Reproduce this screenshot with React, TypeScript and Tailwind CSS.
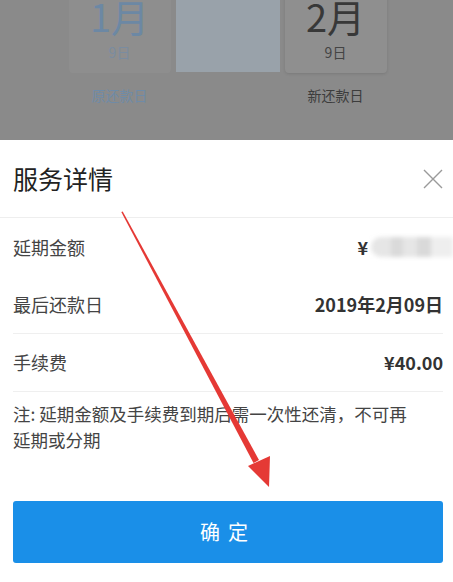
import React from 'react';

const font = { fontFamily: '"Noto Sans CJK SC", "Noto Sans", sans-serif' };

const DateCard = ({ month, day, label, active }: { month: string; day: string; label: string; active?: boolean }) => (
    <div className="flex flex-col items-center">
        <div className={`flex h-[105px] w-[102px] flex-col items-center justify-end rounded-[4px] pb-[14px] ${active ? 'bg-[#8f8f8f] shadow-[0_1px_3px_rgba(0,0,0,0.12)]' : 'bg-[#8e8e8e]'}`}>
            <div className={`text-[38px] leading-none ${active ? 'text-[#383838]' : 'text-[#6c88a4]'}`}>{month}</div>
            <div className={`mt-[10px] text-[14px] leading-none ${active ? 'text-[#444]' : 'text-[#7a8ca0]'}`}>{day}</div>
        </div>
        <div className={`mt-[15px] text-[14px] leading-none ${active ? 'text-[#3c3c3c]' : 'text-[#6f8ba7]'}`}>{label}</div>
    </div>
);

const Row = ({ label, children, divider }: { label: string; children: React.ReactNode; divider?: boolean }) => (
    <div className={`ml-[13px] mr-[10px] flex h-[58px] items-center justify-between ${divider ? 'border-b border-[#efefef]' : ''}`}>
        <span className="text-[18px] text-[#444]">{label}</span>
        {children}
    </div>
);

export default function App() {
    return (
        <div className="relative h-[582px] w-[453px] overflow-hidden bg-white" style={font}>
            {/* dimmed page behind the sheet */}
            <div className="h-[140px] overflow-hidden bg-[#8a8a8a]">
                <div className="-mt-[32px] flex items-start justify-center gap-[5px] pl-[2px]">
                    <DateCard month="1月" day="9日" label="原还款日" />
                    <div className="h-[104px] w-[104px] bg-[#99a2aa]" />
                    <DateCard month="2月" day="9日" label="新还款日" active />
                </div>
            </div>

            {/* sheet */}
            <div className="flex h-[78px] items-center justify-between border-b border-[#eeeeee] pl-[13px] pr-[10px]">
                <span className="text-[25px] text-[#222]">服务详情</span>
                <svg width="20" height="20" viewBox="0 0 20 20">
                    <path d="M1 1 L19 19 M19 1 L1 19" stroke="#9a9a9a" strokeWidth="1.4" fill="none" />
                </svg>
            </div>

            <Row label="延期金额">
                <div className="-mr-[10px] flex items-center">
                    <span className="text-[18px] font-bold text-[#333]">¥</span>
                    <div className="ml-[3px] flex h-[22px] w-[82px] items-center blur-[2px]">
                        <div className="h-[20px] w-[20px] rounded-l-full bg-[#e6e6e6]" />
                        <div className="h-[20px] w-[12px] bg-[#dadada]" />
                        <div className="h-[20px] w-[14px] bg-[#e6e6e6]" />
                        <div className="h-[20px] w-[14px] bg-[#d9d9d9]" />
                        <div className="h-[20px] w-[22px] bg-[#eeeeee]" />
                    </div>
                </div>
            </Row>
            <Row label="最后还款日" divider>
                <span className="text-[18px] font-bold text-[#333]">2019年2月09日</span>
            </Row>
            <Row label="手续费" divider>
                <span className="text-[18px] font-bold text-[#333]">¥40.00</span>
            </Row>

            <p className="mx-[13px] mt-[9px] text-[17.5px] leading-[26px] text-[#444]">
                注: 延期金额及手续费到期后需一次性还清，不可再
                <br />
                延期或分期
            </p>

            <div className="ml-[13px] mr-[10px] mt-[48px]">
                <button className="flex h-[62px] w-full items-center justify-center rounded-[3px] bg-[#1a8fe8] text-[20px] tracking-[8px] text-white">
                    确定
                </button>
            </div>

            {/* red annotation arrow */}
            <svg className="pointer-events-none absolute left-0 top-0" width="453" height="582" viewBox="0 0 453 582">
                <polygon points="121.3,212 122.7,211.4 259,460 253.5,463" fill="#e53935" />
                <polygon points="269,487 248,466 270,456" fill="#e53935" />
            </svg>
        </div>
    );
}
